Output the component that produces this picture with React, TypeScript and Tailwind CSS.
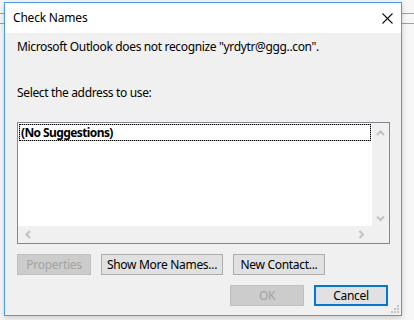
import type { ReactNode } from 'react';

const font = { fontFamily: '"Segoe UI", "Noto Sans", "Open Sans", sans-serif' };

function Chevron({ dir }: { dir: 'up' | 'down' | 'left' | 'right' }) {
  const paths: Record<string, string> = {
    up: 'M1 6 L4.5 2.5 L8 6',
    down: 'M1 2.5 L4.5 6 L8 2.5',
    left: 'M6 1 L2.5 4.5 L6 8',
    right: 'M2.5 1 L6 4.5 L2.5 8',
  };
  return (
    <svg width="9" height="9" viewBox="0 0 9 9">
      <path d={paths[dir]} fill="none" stroke="#c2c2c2" strokeWidth="2" />
    </svg>
  );
}

function Button({
  children,
  width,
  disabled,
  focused,
}: {
  children: ReactNode;
  width: string;
  disabled?: boolean;
  focused?: boolean;
}) {
  const base = 'h-[21px] flex items-center justify-center text-[12px] leading-none tracking-[-0.3px]';
  if (disabled) {
    return <div className={`${base} ${width} bg-[#cccccc] border border-[#bfbfbf] text-[#a3a3a3]`}>{children}</div>;
  }
  if (focused) {
    return <div className={`${base} ${width} bg-[#e1e1e1] border-2 border-[#0078d7] text-black`}>{children}</div>;
  }
  return <div className={`${base} ${width} bg-[#e1e1e1] border border-[#adadad] text-black`}>{children}</div>;
}

export default function App() {
  return (
    <div className="relative w-[414px] h-[320px] bg-[#f7f7f7] overflow-hidden" style={font}>
      {/* window behind the dialog */}
      <div className="absolute left-0 right-0 top-[13px] h-px bg-[#a0a0a0]" />
      <div className="absolute left-0 right-0 top-[23px] h-px bg-[#a0a0a0]" />

      <div className="relative ml-[4px] mt-[2px] w-[398px] h-[314px] flex flex-col border border-[#4c9be8] shadow-[0_2px_6px_rgba(0,0,0,0.18)]">
        {/* title bar */}
        <div className="h-[30px] bg-white flex items-center justify-between pl-[8px] pr-[8px]">
          <span className="text-[12px] text-black tracking-[-0.2px]">Check Names</span>
          <svg width="11" height="11" viewBox="0 0 11 11">
            <path d="M0.5 0.5 L10.5 10.5 M10.5 0.5 L0.5 10.5" stroke="#111" strokeWidth="1.1" />
          </svg>
        </div>

        {/* body */}
        <div className="flex-1 bg-[#f0f0f0] pl-[12px] pr-[12px] flex flex-col text-[12px] text-black tracking-[-0.35px]">
          <div className="mt-[6px] h-[16px] leading-[16px]">Microsoft Outlook does not recognize "yrdytr@ggg..con".</div>
          <div className="mt-[30px] h-[16px] leading-[16px]">Select the address to use:</div>

          {/* list box */}
          <div className="mt-[21px] w-[373px] h-[122px] border border-[#828790] flex flex-col">
            <div className="flex h-[103px]">
              <div className="flex-1 bg-white pt-px pl-px pr-px">
                <div className="h-[17px] border border-dotted border-black bg-[#e8963a]">
                  <div className="h-full bg-white flex items-center pl-px font-bold leading-none tracking-[-0.6px]">
                    (No Suggestions)
                  </div>
                </div>
              </div>
              <div className="w-[17px] bg-[#f0f0f0] flex flex-col items-center justify-between pt-[6px] pb-[3px]">
                <Chevron dir="up" />
                <Chevron dir="down" />
              </div>
            </div>
            <div className="flex-1 flex">
              <div className="flex-1 bg-[#f0f0f0] flex items-center justify-between pl-[6px] pr-[6px]">
                <Chevron dir="left" />
                <Chevron dir="right" />
              </div>
              <div className="w-[17px] bg-[#f0f0f0]" />
            </div>
          </div>

          {/* buttons */}
          <div className="mt-[10px] flex gap-[10px]">
            <Button width="w-[74px]" disabled>Properties</Button>
            <Button width="w-[122px]">Show More Names...</Button>
            <Button width="w-[92px]">New Contact...</Button>
          </div>
          <div className="mt-[10px] flex justify-end gap-[10px] pr-px">
            <Button width="w-[74px]" disabled>OK</Button>
            <Button width="w-[74px]" focused>Cancel</Button>
          </div>
        </div>

        {/* resize grip */}
        <svg width="8" height="8" viewBox="0 0 8 8" className="absolute right-[2px] bottom-[2px]">
          <rect x="6" y="0" width="2" height="2" fill="#c4c4c4" />
          <rect x="3" y="3" width="2" height="2" fill="#c4c4c4" />
          <rect x="6" y="3" width="2" height="2" fill="#c4c4c4" />
          <rect x="0" y="6" width="2" height="2" fill="#c4c4c4" />
          <rect x="3" y="6" width="2" height="2" fill="#c4c4c4" />
          <rect x="6" y="6" width="2" height="2" fill="#c4c4c4" />
        </svg>
      </div>
    </div>
  );
}
